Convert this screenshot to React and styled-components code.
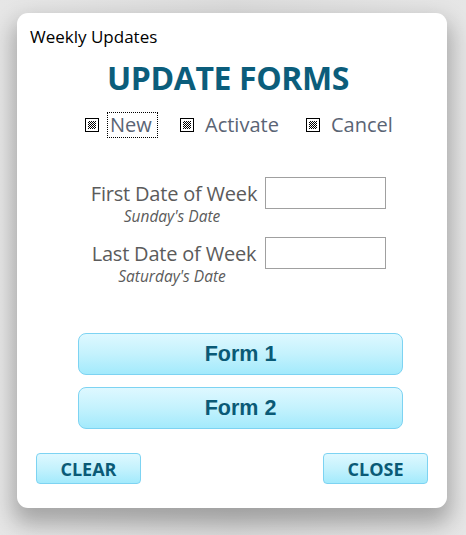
import React from 'react';
import styled, { createGlobalStyle } from 'styled-components';

const GlobalStyle = createGlobalStyle`
  html, body { margin: 0; padding: 0; }
  body {
    width: 466px;
    height: 535px;
    overflow: hidden;
    background: #e2e2e2;
    font-family: "Open Sans", "Noto Sans", sans-serif;
  }
`;

const Backdrop = styled.div`
  width: 466px;
  height: 535px;
  box-sizing: border-box;
  padding: 13px 19px 27px 17px;
  background: linear-gradient(90deg, #e6e6e6 0%, #dcdcdc 50%, #e6e6e6 100%);
`;

const Dialog = styled.div`
  width: 430px;
  height: 495px;
  box-sizing: border-box;
  background: #fff;
  border-radius: 11px;
  box-shadow: 0 12px 22px 4px rgba(0, 0, 0, 0.28);
  padding: 13px 19px 0 13px;
  display: flex;
  flex-direction: column;
`;

const Caption = styled.div`
  font-size: 17px;
  line-height: 22px;
  color: #000;
`;

const Title = styled.h1`
  margin: 10px 0 0;
  text-align: center;
  font-size: 32px;
  letter-spacing: -0.4px;
  line-height: 40px;
  font-weight: 700;
  color: #0b5d7b;
  padding-right: 2px;
`;

const OptionRow = styled.div`
  display: flex;
  align-items: center;
  margin: 14px 0 0 55px;
  height: 26px;
`;

const Option = styled.label`
  display: flex;
  align-items: center;
  gap: 11px;
  width: ${p => (p.$w ? `${p.$w}px` : 'auto')};
  font-size: 20px;
  color: #5a6474;
`;

const Box = styled.span`
  flex: none;
  width: 14px;
  height: 14px;
  box-sizing: border-box;
  border: 1px solid #000;
  padding: 2px;
  background: #fff;
  &::after {
    content: '';
    display: block;
    width: 8px;
    height: 8px;
    background: repeating-conic-gradient(#000 0 25%, #fff 0 50%) 0 0 / 2px 2px;
  }
`;

const OptionText = styled.span`
  line-height: 24px;
  padding: ${p => (p.$focused ? '0 5px 0 2px' : '0')};
  margin-left: ${p => (p.$focused ? -2 : 0)}px;
  outline: ${p => (p.$focused ? '1px dotted #000' : 'none')};
`;

const DateGrid = styled.div`
  display: grid;
  grid-template-columns: 176px 121px;
  column-gap: 3px;
  row-gap: 12px;
  margin: 39px 0 0 56px;
`;

const LabelCell = styled.div`
  height: 48px;
  text-align: center;
  color: #5b5b5b;
`;

const MainLabel = styled.div`
  font-size: 20px;
  line-height: 26px;
  margin-top: 4px;
  letter-spacing: -0.2px;
`;

const SubLabel = styled.div`
  font-size: 15.5px;
  font-style: italic;
  line-height: 18px;
  padding-right: 4px;
`;

const DateInput = styled.input`
  width: 121px;
  height: 32px;
  box-sizing: border-box;
  border: 1px solid #a0a0a0;
  margin: 0;
  padding: 0 4px;
  outline: none;
`;

const FormButtons = styled.div`
  display: flex;
  flex-direction: column;
  gap: 12px;
  margin: 48px 0 0 48px;
`;

const GlassButton = styled.button`
  width: ${p => p.$w}px;
  height: ${p => p.$h}px;
  box-sizing: border-box;
  border: 1px solid #7dd3f2;
  border-radius: ${p => (p.$small ? 4 : 8)}px;
  background: linear-gradient(180deg, #def8ff 0%, #c4f2fd 50%, #a3eafc 100%);
  color: #0a5a76;
  font-weight: 700;
  padding: 0;
  cursor: pointer;
  font-family: ${p => (p.$small ? '"Open Sans", "Noto Sans", sans-serif' : '"Liberation Sans", Arial, sans-serif')};
  font-size: ${p => (p.$small ? 18 : 21.5)}px;
`;

const Footer = styled.div`
  display: flex;
  justify-content: space-between;
  margin: 24px 0 0 6px;
`;

export default function App() {
  return (
    <>
      <GlobalStyle />
      <Backdrop>
        <Dialog>
          <Caption>Weekly Updates</Caption>
          <Title>UPDATE FORMS</Title>
          <OptionRow>
            <Option $w={95}>
              <Box />
              <OptionText $focused>New</OptionText>
            </Option>
            <Option $w={126}>
              <Box />
              <OptionText>Activate</OptionText>
            </Option>
            <Option>
              <Box />
              <OptionText>Cancel</OptionText>
            </Option>
          </OptionRow>
          <DateGrid>
            <LabelCell>
              <MainLabel>First Date of Week</MainLabel>
              <SubLabel>Sunday's Date</SubLabel>
            </LabelCell>
            <DateInput />
            <LabelCell>
              <MainLabel>Last Date of Week</MainLabel>
              <SubLabel>Saturday's Date</SubLabel>
            </LabelCell>
            <DateInput />
          </DateGrid>
          <FormButtons>
            <GlassButton $w={325} $h={42}>Form 1</GlassButton>
            <GlassButton $w={325} $h={42}>Form 2</GlassButton>
          </FormButtons>
          <Footer>
            <GlassButton $small $w={105} $h={31}>CLEAR</GlassButton>
            <GlassButton $small $w={105} $h={31}>CLOSE</GlassButton>
          </Footer>
        </Dialog>
      </Backdrop>
    </>
  );
}
